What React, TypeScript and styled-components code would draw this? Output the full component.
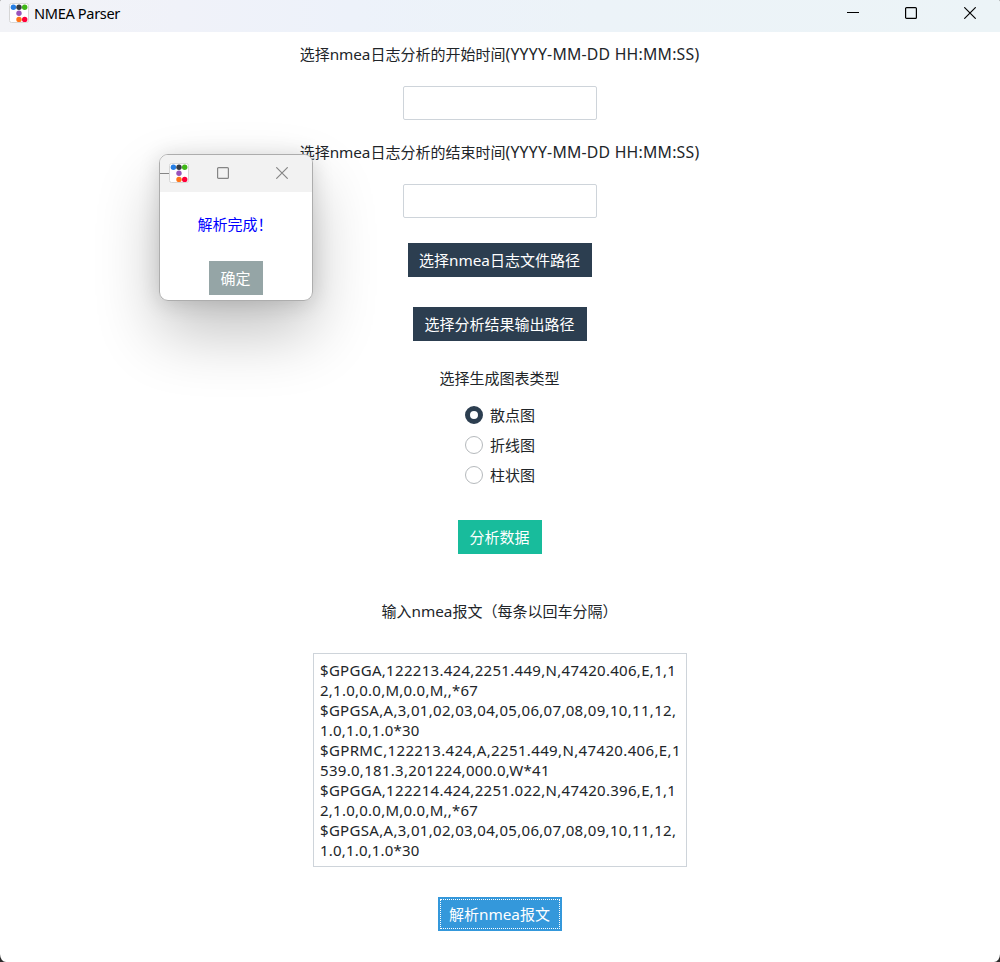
import React from 'react';
import styled, { createGlobalStyle } from 'styled-components';

const GlobalStyle = createGlobalStyle`
  * { box-sizing: border-box; }
  body {
    margin: 0;
    background: #2b2b2b;
    font-family: "Noto Sans", "Noto Sans CJK SC", sans-serif;
    font-size: 15px;
    color: #212529;
  }
`;

const Window = styled.div`
  position: relative;
  width: 1000px;
  height: 962px;
  overflow: hidden;
  background: #fff;
  border-radius: 1px 1px 6px 6px / 3px 3px 8px 8px;
`;

const TitleBar = styled.header`
  display: flex;
  align-items: flex-start;
  justify-content: space-between;
  height: 32px;
  padding: 3px 24px 0 9px;
  background: linear-gradient(90deg, #f2f3f7 0%, #f0f2f9 18%, #edf2fa 35%, #ecf3f8 60%, #ecf4f7 100%);
`;

const Brand = styled.div`
  display: flex;
  align-items: center;
  gap: 5px;
  height: 20px;
`;

const Title = styled.span`
  font-size: 14.6px;
  letter-spacing: -0.35px;
  line-height: 20px;
  color: #000;
  white-space: nowrap;
`;

const Controls = styled.div`
  display: flex;
  gap: 46px;
  padding-top: 4px;

  svg:last-child { margin-left: 1px; }
`;

const Content = styled.main`
  display: flex;
  flex-direction: column;
  align-items: center;
  padding-top: 12px;
`;

const Label = styled.div<{ $top?: number }>`
  height: 20px;
  margin-top: ${(p) => p.$top ?? 0}px;
  padding-right: 1px;
  line-height: 20px;
  white-space: nowrap;
`;

const Latin = styled.span<{ $size: number; $spacing: number }>`
  font-size: ${(p) => p.$size}px;
  letter-spacing: ${(p) => p.$spacing}px;
`;

const Field = styled.input`
  width: 194px;
  height: 34px;
  margin-top: 22px;
  padding: 0 6px;
  border: 1px solid #ced4da;
  border-radius: 2px;
  background: #fff;
  outline: none;
`;

const Button = styled.button<{ $bg: string; $width: number; $top: number }>`
  flex: none;
  width: ${(p) => p.$width}px;
  height: 34px;
  margin: ${(p) => p.$top}px 0 0;
  padding: 0 1px 0 0;
  border: 0;
  background: ${(p) => p.$bg};
  color: #fff;
  font: inherit;
  line-height: 34px;
  white-space: nowrap;
`;

const FocusedButton = styled(Button)`
  outline: 1px dotted #fff;
  outline-offset: -3px;
`;

const RadioGroup = styled.div`
  display: flex;
  flex-direction: column;
  margin-top: 12px;
`;

const RadioRow = styled.label`
  display: flex;
  align-items: center;
  gap: 7px;
  height: 30px;
  line-height: 30px;
`;

const Dot = styled.span<{ $on?: boolean }>`
  width: 18px;
  height: 18px;
  border-radius: 50%;
  border: ${(p) => (p.$on ? '5px solid #2c3e50' : '1px solid #b5b9bc')};
  background: #fff;
`;

const Messages = styled.div`
  width: 374px;
  height: 214px;
  margin-top: 32px;
  padding: 6px 0 0 6px;
  border: 1px solid #ced4da;
`;

const MessageLine = styled.div<{ $spacing: number }>`
  height: 20px;
  line-height: 20px;
  white-space: nowrap;
  letter-spacing: ${(p) => p.$spacing}px;
`;

const Dialog = styled.section`
  position: absolute;
  left: 159px;
  top: 154px;
  width: 154px;
  height: 147px;
  overflow: hidden;
  border: 1px solid #adadad;
  border-radius: 9px;
  background: #fff;
`;

const DialogShadow = styled.div`
  position: absolute;
  left: 159px;
  top: 154px;
  width: 154px;
  height: 147px;
  border-radius: 9px;
  box-shadow: 0 32px 64px rgba(0, 0, 0, 0.24), 0 2px 21px rgba(0, 0, 0, 0.14);
`;

const DialogBar = styled.div`
  display: flex;
  align-items: center;
  height: 37px;
  padding-bottom: 1px;
  background: #f2f2f2;
`;

const MinimizeStub = styled.span`
  width: 9px;
  height: 1px;
  background: #858585;
`;

const DialogControls = styled.div`
  display: flex;
  gap: 47px;
  margin-left: 28px;
`;

const DialogBody = styled.div`
  display: flex;
  flex-direction: column;
  align-items: center;
  padding-top: 22px;
`;

const Notice = styled.div`
  height: 20px;
  padding-right: 2px;
  line-height: 20px;
  color: #0000ff;
  white-space: nowrap;
`;

const AppIcon = () => (
  <svg width="20" height="20" viewBox="0 0 20 20">
    <rect x="0.5" y="0.5" width="19" height="19" rx="2" fill="#fff" stroke="#d6d6d6" />
    <circle cx="4.4" cy="4.2" r="2.7" fill="#267fe5" />
    <circle cx="10" cy="4.2" r="2.7" fill="#343a40" />
    <circle cx="15.7" cy="4.2" r="2.7" fill="#3fb618" />
    <circle cx="10" cy="10.2" r="2.7" fill="#9954bb" />
    <circle cx="10" cy="16.4" r="2.7" fill="#ff7518" />
    <circle cx="15.7" cy="16.4" r="2.7" fill="#ff0039" />
  </svg>
);

const MinimizeIcon = () => (
  <svg width="12" height="12" viewBox="0 0 12 12">
    <path d="M0 5.5H12" stroke="#000" />
  </svg>
);

const MaximizeIcon = ({ color = '#000' }: { color?: string }) => (
  <svg width="12" height="12" viewBox="0 0 12 12">
    <rect x="0.6" y="0.6" width="10.8" height="10.8" rx="1" fill="none" stroke={color} strokeWidth="1.2" />
  </svg>
);

const CloseIcon = ({ color = '#000' }: { color?: string }) => (
  <svg width="12" height="12" viewBox="0 0 12 12">
    <path d="M0.3 0.3L11.7 11.7M11.7 0.3L0.3 11.7" fill="none" stroke={color} strokeWidth="1.15" />
  </svg>
);

const chartTypes = ['散点图', '折线图', '柱状图'];

const messages: { text: string; spacing: number }[] = [
  { text: '$GPGGA,122213.424,2251.449,N,47420.406,E,1,1', spacing: 0.3 },
  { text: '2,1.0,0.0,M,0.0,M,,*67', spacing: 0.24 },
  { text: '$GPGSA,A,3,01,02,03,04,05,06,07,08,09,10,11,12,', spacing: 0.31 },
  { text: '1.0,1.0,1.0*30', spacing: 0.18 },
  { text: '$GPRMC,122213.424,A,2251.449,N,47420.406,E,1', spacing: 0.36 },
  { text: '539.0,181.3,201224,000.0,W*41', spacing: 0.3 },
  { text: '$GPGGA,122214.424,2251.022,N,47420.396,E,1,1', spacing: 0.3 },
  { text: '2,1.0,0.0,M,0.0,M,,*67', spacing: 0.24 },
  { text: '$GPGSA,A,3,01,02,03,04,05,06,07,08,09,10,11,12,', spacing: 0.31 },
  { text: '1.0,1.0,1.0*30', spacing: 0.18 },
];

const Nmea = () => <Latin $size={15.3} $spacing={-0.05}>nmea</Latin>;
const DateFormat = () => <Latin $size={15.8} $spacing={0.23}>(YYYY-MM-DD HH:MM:SS)</Latin>;

export default function App() {
  return (
    <>
      <GlobalStyle />
      <Window>
        <TitleBar>
          <Brand>
            <AppIcon />
            <Title>NMEA Parser</Title>
          </Brand>
          <Controls>
            <MinimizeIcon />
            <MaximizeIcon />
            <CloseIcon />
          </Controls>
        </TitleBar>
        <Content>
          <Label>选择<Nmea />日志分析的开始时间<DateFormat /></Label>
          <Field />
          <Label $top={22}>选择<Nmea />日志分析的结束时间<DateFormat /></Label>
          <Field />
          <Button $bg="#2c3e50" $width={184} $top={25}>选择<Nmea />日志文件路径</Button>
          <Button $bg="#2c3e50" $width={174} $top={30}>选择分析结果输出路径</Button>
          <Label $top={27}>选择生成图表类型</Label>
          <RadioGroup>
            {chartTypes.map((name, i) => (
              <RadioRow key={name}>
                <Dot $on={i === 0} />
                {name}
              </RadioRow>
            ))}
          </RadioGroup>
          <Button $bg="#18bc9c" $width={84} $top={30}>分析数据</Button>
          <Label $top={47}>输入<Nmea />报文（每条以回车分隔）</Label>
          <Messages>
            {messages.map((m, i) => (
              <MessageLine key={i} $spacing={m.spacing}>{m.text}</MessageLine>
            ))}
          </Messages>
          <FocusedButton $bg="#3498db" $width={124} $top={30}>解析<Nmea />报文</FocusedButton>
        </Content>
        <DialogShadow />
        <Dialog>
          <DialogBar>
            <MinimizeStub />
            <AppIcon />
            <DialogControls>
              <MaximizeIcon color="#858585" />
              <CloseIcon color="#858585" />
            </DialogControls>
          </DialogBar>
          <DialogBody>
            <Notice>解析完成！</Notice>
            <Button $bg="#95a5a6" $width={54} $top={27}>确定</Button>
          </DialogBody>
        </Dialog>
      </Window>
    </>
  );
}
